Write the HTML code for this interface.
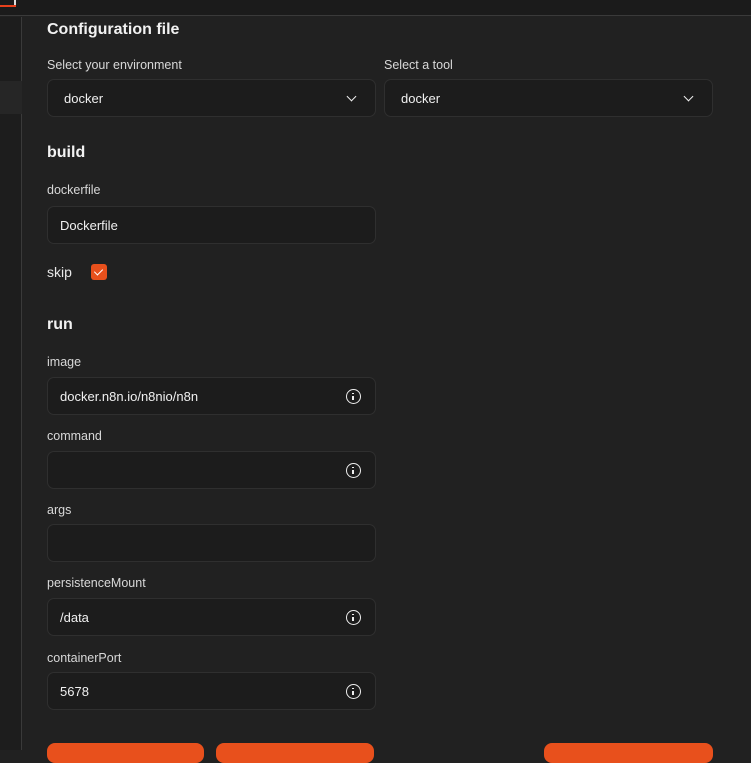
<!DOCTYPE html>
<html><head><style>
*{margin:0;padding:0;box-sizing:border-box}
body{width:751px;height:750px;background:#212121;position:relative;overflow:hidden;font-family:"Liberation Sans",sans-serif;color:#e8e8e8}
.a{position:absolute}
.lbl{position:absolute;font-size:12.5px;color:#d8d8d8;left:47px}
.h{position:absolute;left:47px;font-weight:bold;font-size:16px;color:#f2f2f2}
.in{position:absolute;height:38px;background:#1c1c1c;border:1px solid #2f2f2f;border-radius:7px;font-size:13px;color:#f0f0f0;padding-left:12px;line-height:38px}
.in.w{left:47px;width:329px}
.info{position:absolute;right:14px;top:11px;width:15px;height:15px;border:1.5px solid #eee;border-radius:50%}
.info:before{content:"";position:absolute;left:5px;top:5.5px;width:1.6px;height:4.5px;background:#eee}
.info:after{content:"";position:absolute;left:5px;top:2.5px;width:1.6px;height:1.6px;background:#eee}
.chev{position:absolute;right:20px;top:13px;width:7px;height:7px;border-right:1.5px solid #eee;border-bottom:1.5px solid #eee;transform:rotate(45deg)}
.btn{position:absolute;top:743px;height:20px;background:#e8501c;border-radius:8px}
</style></head><body>
<div class="a" style="left:0;top:0;width:751px;height:16px;background:#1b1b1b;border-bottom:1px solid #3a3a3a"></div>
<div class="a" style="left:0;top:5px;width:16px;height:2px;background:#e8401c"></div>
<div class="a" style="left:14px;top:0;width:2px;height:5px;background:#ddd"></div>
<div class="a" style="left:0;top:17px;width:22px;height:733px;background:#1d1d1d;border-right:1px solid #3a3a3a"></div>
<div class="a" style="left:0;top:81px;width:22px;height:33px;background:#262626"></div>

<div class="h" style="top:21px">Configuration file</div>
<div class="lbl" style="top:58px">Select your environment</div>
<div class="lbl" style="top:58px;left:384px">Select a tool</div>
<div class="in w" style="top:79px;padding-left:16px">docker<div class="chev"></div></div>
<div class="in" style="top:79px;left:384px;width:329px;padding-left:16px">docker<div class="chev"></div></div>

<div class="h" style="top:144px">build</div>
<div class="lbl" style="top:183px">dockerfile</div>
<div class="in w" style="top:206px">Dockerfile</div>
<div class="a" style="left:47px;top:264px;font-size:14px;color:#e8e8e8">skip</div>
<div class="a" style="left:91px;top:264px;width:16px;height:16px;background:#e8501c;border-radius:3px"><div style="position:absolute;left:5px;top:3px;width:5px;height:8px;border-right:1.5px solid #fff;border-bottom:1.5px solid #fff;transform:rotate(45deg)"></div></div>

<div class="h" style="top:316px">run</div>
<div class="lbl" style="top:355px">image</div>
<div class="in w" style="top:377px">docker.n8n.io/n8nio/n8n<div class="info"></div></div>
<div class="lbl" style="top:429px">command</div>
<div class="in w" style="top:451px"><div class="info"></div></div>
<div class="lbl" style="top:503px">args</div>
<div class="in w" style="top:524px"></div>
<div class="lbl" style="top:576px">persistenceMount</div>
<div class="in w" style="top:598px">/data<div class="info"></div></div>
<div class="lbl" style="top:651px">containerPort</div>
<div class="in w" style="top:672px">5678<div class="info"></div></div>

<div class="btn" style="left:47px;width:157px"></div>
<div class="btn" style="left:216px;width:158px"></div>
<div class="btn" style="left:544px;width:169px"></div>
</body></html>
